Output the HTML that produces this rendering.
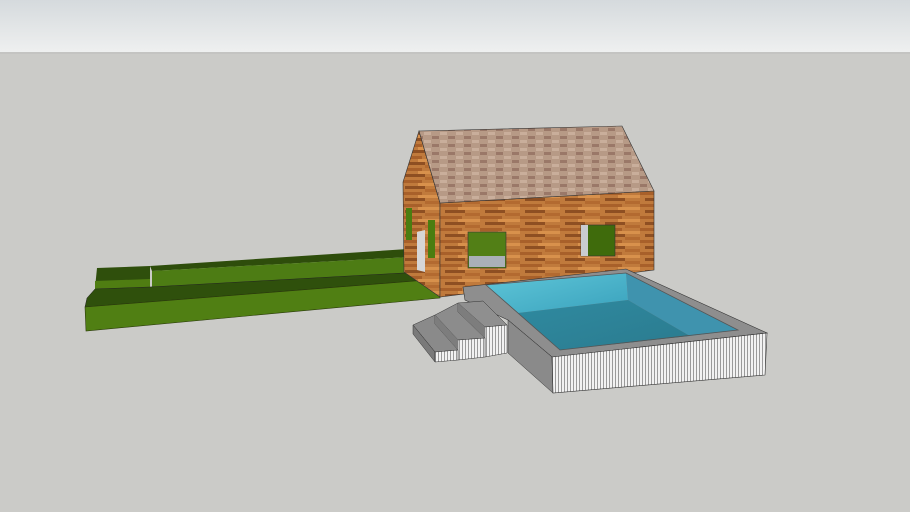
<!DOCTYPE html>
<html><head><meta charset="utf-8"><style>
html,body{margin:0;padding:0;width:910px;height:512px;overflow:hidden;background:#cbcbc8}
</style></head><body>
<svg width="910" height="512" viewBox="0 0 910 512" xmlns="http://www.w3.org/2000/svg">
<defs>
<linearGradient id="sky" x1="0" y1="0" x2="0" y2="1">
<stop offset="0" stop-color="#d5dadd"/><stop offset="1" stop-color="#eff0f0"/>
</linearGradient>
<pattern id="wood" width="40" height="12" patternUnits="userSpaceOnUse">
<rect width="40" height="12" fill="#c07a3c"/>
<rect x="0" y="0" width="22" height="3" fill="#a8602a"/>
<rect x="18" y="3" width="22" height="3" fill="#d8914c"/>
<rect x="5" y="6" width="20" height="3" fill="#8e4f22"/>
<rect x="25" y="9" width="15" height="3" fill="#b36a30"/>
</pattern>
<pattern id="roof" width="16" height="8" patternUnits="userSpaceOnUse">
<rect width="16" height="8" fill="#b79a86"/>
<rect x="0" y="0" width="7" height="3" fill="#9a7868"/>
<rect x="8" y="4" width="7" height="3" fill="#c9ae9b"/>
</pattern>
<pattern id="str" width="3" height="10" patternUnits="userSpaceOnUse">
<rect width="3" height="10" fill="#f2f2f2"/><rect width="1" height="10" fill="#9a9a9a"/>
</pattern>
<linearGradient id="wb" x1="0" y1="0" x2="1" y2="1">
<stop offset="0" stop-color="#5fc6d8"/><stop offset="1" stop-color="#3aa2bd"/>
</linearGradient>
<linearGradient id="wf" x1="0" y1="0" x2="1" y2="1">
<stop offset="0" stop-color="#2f8aa0"/><stop offset="1" stop-color="#2b7b8f"/>
</linearGradient>
</defs>
<rect width="910" height="53" fill="url(#sky)"/>
<rect y="52" width="910" height="2" fill="#c4c4c2"/>

<!-- green beds -->
<polygon points="97,268 150,266 150,286 95,288" fill="#2f4f0c"/>
<polygon points="95,281 150,279 150,290 95,291" fill="#4f7d12"/>
<polygon points="150,266 408,249 410,257 152,271" fill="#2e4d0b"/>
<polygon points="152,271 410,257 410,273 152,292" fill="#4d7c14"/>
<polygon points="87,298 95,289 150,287 440,271 440,279 85,307" fill="#2f500c" stroke="#222" stroke-width="0.5"/>
<polygon points="85,307 440,279 440,298 86,331" fill="#507f13" stroke="#2a3a0a" stroke-width="0.6"/>

<!-- house -->
<polygon points="419,131 403,182 404,272 440,297 440,203" fill="url(#wood)" stroke="#333" stroke-width="0.6"/>
<polygon points="440,203 654,191 654,270 440,297" fill="url(#wood)" stroke="#333" stroke-width="0.6"/>
<polygon points="419,131 622,126 654,191 440,203" fill="url(#roof)" stroke="#333" stroke-width="0.6"/>
<rect x="406" y="208" width="6" height="32" fill="#4a7d10"/>
<rect x="428" y="220" width="7" height="38" fill="#4a7d10"/>
<polygon points="417,232 425,230 425,272 417,270" fill="#d6d6d6"/>
<rect x="468" y="232" width="38" height="36" fill="#527f16" stroke="#333" stroke-width="0.6"/>
<rect x="469" y="256" width="36" height="11" fill="#aab0b8"/>
<rect x="581" y="225" width="34" height="31" fill="#3f6b0c" stroke="#333" stroke-width="0.6"/>
<rect x="581" y="225" width="7" height="31" fill="#c9ccd0"/>

<!-- pool -->
<polygon points="463,287 626,269 767,333 552,357 508,320 465,300" fill="#8e8e8e" stroke="#333" stroke-width="0.6"/>
<polygon points="508,320 552,357 553,393 508,353" fill="#8a8a8a" stroke="#333" stroke-width="0.5"/>
<polygon points="552,357 767,333 765,375 553,393" fill="url(#str)" stroke="#333" stroke-width="0.6"/>
<polygon points="486,285 626,273 628,300 518,313" fill="url(#wb)"/>
<polygon points="626,273 738,330 690,336 628,300" fill="#3f93ae"/>
<polygon points="518,313 628,300 690,336 560,350" fill="url(#wf)"/>
<polygon points="486,285 626,273 738,330 560,350" fill="none" stroke="#555" stroke-width="0.8"/>

<!-- steps -->
<polygon points="458,303 483,301 507,325 485,327" fill="#8f8f8f" stroke="#333" stroke-width="0.5"/>
<polygon points="485,327 507,325 507,353 485,357" fill="url(#str)" stroke="#333" stroke-width="0.5"/>
<polygon points="435,315 458,303 458,312 485,338 458,340" fill="#8c8c8c" stroke="#333" stroke-width="0.5"/>
<polygon points="458,303 485,327 485,338 458,312" fill="#7d7d7d"/>
<polygon points="458,340 485,338 485,357 458,360" fill="url(#str)" stroke="#333" stroke-width="0.5"/>
<polygon points="413,325 435,315 435,324 458,350 435,352" fill="#8a8a8a" stroke="#333" stroke-width="0.5"/>
<polygon points="435,315 458,340 458,350 435,324" fill="#7d7d7d"/>
<polygon points="413,325 435,352 435,362 413,334" fill="#7a7a7a" stroke="#333" stroke-width="0.5"/>
<polygon points="435,352 458,350 458,360 435,362" fill="url(#str)" stroke="#333" stroke-width="0.5"/>
</svg>
</body></html>
